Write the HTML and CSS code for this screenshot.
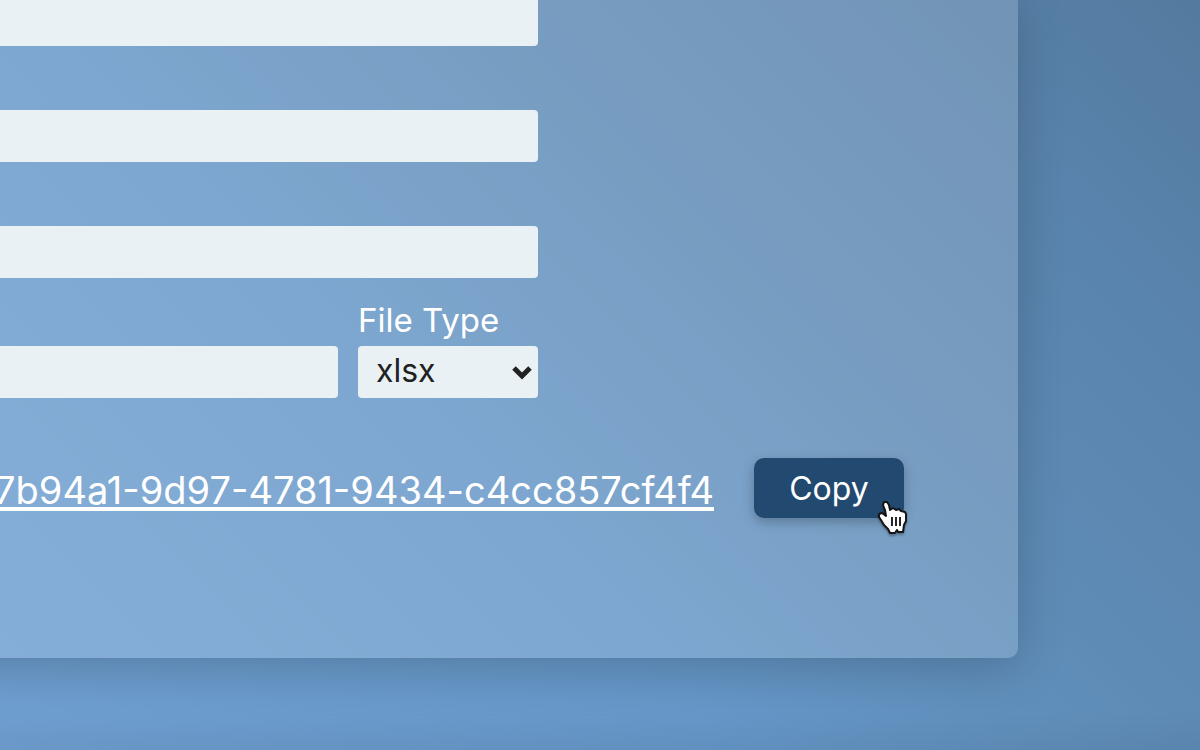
FILE: index.html
```html
<!DOCTYPE html>
<html lang="en">
<head>
  <meta charset="UTF-8" />
  <meta name="viewport" content="width=device-width, initial-scale=1.0" />
  <title>Share File</title>
  <link rel="stylesheet" href="styles.css">
</head>
<body>
  <main class="panel">
    <!-- File details -->
    <form class="fields">
      <input type="text" class="field" aria-label="Title" />
      <input type="text" class="field" aria-label="Author" />
      <input type="text" class="field" aria-label="Description" />
      <div class="field-row">
        <input type="text" class="field" aria-label="File Name" />
        <div class="file-type">
          <label for="fileType">File Type</label>
          <div class="select-wrap">
            <select id="fileType" class="field" name="fileType">
              <option value="xlsx">xlsx</option>
            </select>
            <svg class="chevron" width="20" height="14" viewBox="0 0 20 14" aria-hidden="true">
              <path d="M2 2L10 10L18 2" fill="none" stroke="#212121" stroke-width="5" />
            </svg>
          </div>
        </div>
      </div>
    </form>

    <!-- Share link -->
    <div class="share">
      <div class="share-link">
        <a href="#7b94a1-9d97-4781-9434-c4cc857cf4f4">7b94a1-9d97-4781-9434-c4cc857cf4f4</a>
      </div>
      <div class="copy-wrap">
        <button type="button" class="btn-copy">Copy</button>
        <svg class="pointer" width="32" height="36" viewBox="0 0 32 36" aria-hidden="true">
          <path d="M7 2H10L12 5L13 10L16 8L19 10L22 9L24 11L28 12L29 14V21L27 25L26 32H21L20 30L18 33H13L11 29L7 25L4 20L2 17V14L5 13L9 16L8 10L6 5Z" fill="#fff" stroke="#151515" stroke-width="2" stroke-linejoin="round" />
          <path d="M15 17V26M19 17V26M23 17V26" fill="none" stroke="#252525" stroke-width="2" />
        </svg>
      </div>
    </div>
  </main>
</body>
</html>
```
FILE: styles.css
```css
* { box-sizing: border-box; }
body {
  margin: 0;
  min-height: 100vh;
  overflow: hidden;
  font-family: Inter, "Liberation Sans", sans-serif;
  color: #fff;
  background:
    linear-gradient(to top, rgba(0, 0, 0, 0.05), transparent 40px),
    linear-gradient(45deg, #6f9fd1, #6597c8 38%, #5e8bb6 62%, #5983ac 84%, #547a9e);
}
.panel {
  margin: -6px 182px 0 -80px;
  padding: 0 0 140px 80px;
  background: rgba(255, 255, 255, 0.16);
  border-radius: 0 0 10px 0;
  box-shadow: 0 10px 50px rgba(0, 0, 0, 0.2);
}

/* Form */
.fields { display: flex; flex-direction: column; gap: 64px; max-width: 538px; }
.field {
  display: block;
  width: 100%;
  height: 52px;
  padding: 0 18px;
  border: none;
  border-radius: 0 4px 4px 0;
  background: #e9f1f5;
  color: #212121;
  font: inherit;
  font-size: 32px;
}
.field-row { display: flex; align-items: flex-end; gap: 20px; margin-top: -40px; }
.file-type { flex: 0 0 180px; }
.file-type label { display: block; font-size: 33px; line-height: 36px; margin-bottom: 8px; }
.select-wrap { position: relative; }
.select-wrap .field { appearance: none; border-radius: 4px; padding-bottom: 4px; }
.chevron { position: absolute; right: 6px; top: 20px; pointer-events: none; }

/* Share link */
.share { display: flex; align-items: center; gap: 40px; margin-top: 60px; padding-right: 114px; }
.share-link { flex: 1; min-width: 0; display: flex; justify-content: flex-end; }
.share-link a {
  color: #fff;
  font-size: 38px;
  line-height: 56px;
  padding-top: 4px;
  white-space: nowrap;
  text-decoration-thickness: 4px;
  text-underline-offset: 3px;
  text-decoration-skip-ink: none;
}
.copy-wrap { position: relative; }
.btn-copy {
  display: block;
  width: 150px;
  height: 60px;
  border: none;
  border-radius: 10px;
  background: #22496f;
  color: #fff;
  font: inherit;
  font-size: 32px;
  box-shadow: 0 4px 12px rgba(0, 0, 0, 0.25);
  cursor: pointer;
}
.pointer { position: absolute; right: -5px; bottom: -18px; filter: drop-shadow(0 2px 1px rgba(0, 0, 0, 0.3)); pointer-events: none; }
```
